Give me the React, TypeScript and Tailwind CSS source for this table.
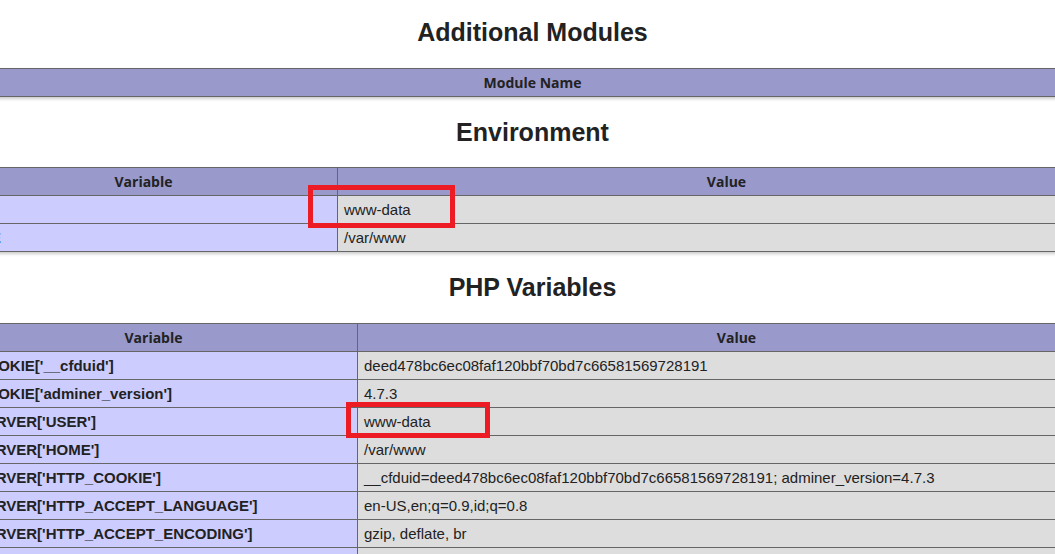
import React from 'react';

const BASE = "font-['Liberation_Sans',Arial,sans-serif]";
const HEAD = "font-['Open_Sans','Noto_Sans',sans-serif]";

type Row = { k: string; v: string; link?: boolean };

const envRows: Row[] = [
    { k: 'USER', v: 'www-data' },
    { k: 'HOME', v: '/var/www', link: true },
];

const phpRows: Row[] = [
    { k: "$_COOKIE['__cfduid']", v: 'deed478bc6ec08faf120bbf70bd7c66581569728191' },
    { k: "$_COOKIE['adminer_version']", v: '4.7.3' },
    { k: "$_SERVER['USER']", v: 'www-data' },
    { k: "$_SERVER['HOME']", v: '/var/www' },
    { k: "$_SERVER['HTTP_COOKIE']", v: '__cfduid=deed478bc6ec08faf120bbf70bd7c66581569728191; adminer_version=4.7.3' },
    { k: "$_SERVER['HTTP_ACCEPT_LANGUAGE']", v: 'en-US,en;q=0.9,id;q=0.8' },
    { k: "$_SERVER['HTTP_ACCEPT_ENCODING']", v: 'gzip, deflate, br' },
    { k: "$_SERVER['HTTP_ACCEPT']", v: 'text/html,application/xhtml+xml,application/xml;q=0.9,image/webp,*/*;q=0.8' },
];

function Heading({ children, className = '' }: { children: React.ReactNode; className?: string }) {
    return (
        <h2 className={`h-[28px] leading-[28px] text-center text-[25px] font-bold text-[#222] ${className}`}>
            {children}
        </h2>
    );
}

function VarTable({ rows, keyWidth, keyPad }: { rows: Row[]; keyWidth: string; keyPad: string }) {
    return (
        <div className="border-t border-[#666] shadow-[1px_2px_3px_#ccc]">
            <div className="flex h-[28px] border-b border-[#666] bg-[#99c]">
                <div className={`${keyWidth} shrink-0 flex items-center justify-center border-r border-[#666] ${HEAD} text-[14px] font-bold text-[#222]`}>
                    Variable
                </div>
                <div className={`flex-1 flex items-center justify-center ${HEAD} text-[14px] font-bold text-[#222]`}>
                    Value
                </div>
            </div>
            {rows.map(r => (
                <div key={r.k} className="flex h-[28px] border-b border-[#666]">
                    <div className={`${keyWidth} ${keyPad} shrink-0 flex items-center pt-[1px] bg-[#ccf] border-r border-[#666] text-[15px] font-bold whitespace-nowrap ${r.link ? 'text-[#3b6fe0]' : 'text-[#222]'}`}>
                        {r.k}
                    </div>
                    <div className="flex-1 flex items-center pt-[1px] bg-[#ddd] pl-[6px] text-[15px] text-[#222] whitespace-nowrap overflow-hidden">
                        {r.v}
                    </div>
                </div>
            ))}
        </div>
    );
}

export default function App() {
    return (
        <div className={`relative w-[1055px] h-[554px] overflow-hidden bg-white ${BASE} text-[#222]`}>
            <div className="w-[1165px] -ml-[50px] pt-[18px]">
                <Heading className="mb-[22px]">Additional Modules</Heading>
                <div className="border-t border-[#666] shadow-[1px_2px_3px_#ccc]">
                    <div className={`flex h-[28px] items-center justify-center border-b border-[#666] bg-[#99c] ${HEAD} text-[14px] font-bold text-[#222]`}>
                        Module Name
                    </div>
                </div>

                <Heading className="mt-[21px] mb-[21px]">Environment</Heading>
                <VarTable rows={envRows} keyWidth="w-[388px]" keyPad="pl-[6px]" />

                <Heading className="mt-[21px] mb-[22px]">PHP Variables</Heading>
                <VarTable rows={phpRows} keyWidth="w-[408px]" keyPad="pl-[9px]" />
            </div>

            {/* annotation boxes */}
            <div className="absolute left-[308px] top-[185px] w-[147px] h-[43px] border-[5px] border-[#ed1c24]" />
            <div className="absolute left-[346px] top-[402px] w-[144px] h-[36px] border-[5px] border-[#ed1c24]" />
        </div>
    );
}
